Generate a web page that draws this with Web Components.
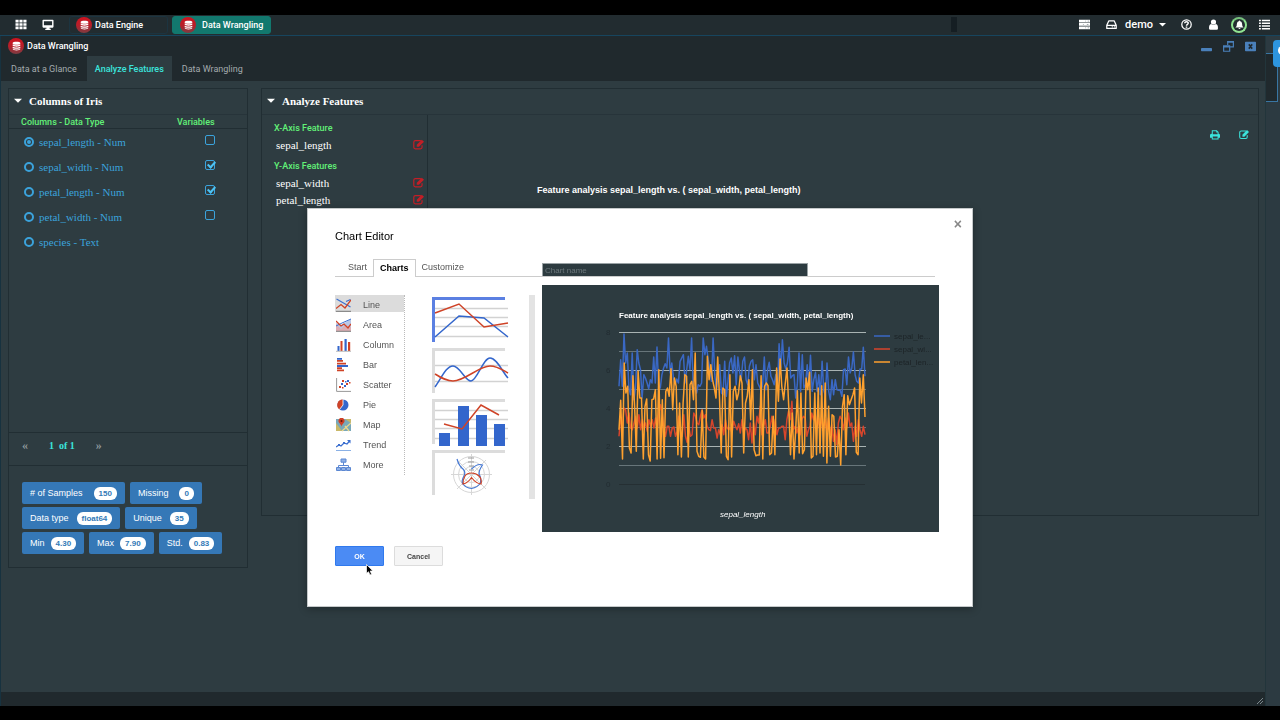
<!DOCTYPE html>
<html lang="en">
<head>
<meta charset="utf-8">
<title>Data Wrangling</title>
<style>
  body {
    margin: 0;
    background: #000;
    color: #fff;
    font-family: Roboto, sans-serif;
    font-size: 9px;
    --dark: #20292d;
    --body: #2e3c41;
    --line: #212e33;
    --blue: #3ba3dc;
    --cyan: #3be4dc;
    --green: #62f178;
  }
</style>
</head>
<body>
<wrangling-app></wrangling-app>

<script>
const ICONS = {
  grid: '<path d="M0 1h4v3.300H0zM5 1h4v3.300H5zM10 1h4v3.300h-4zM0 5.300h4v3.300H0zM5 5.300h4v3.300H5zM10 5.300h4v3.300h-4zM0 9.600h4v3.300H0zM5 9.600h4v3.300H5zM10 9.600h4v3.300h-4z"/>',
  desktop: '<path fill-rule="evenodd" d="M1 1h12q1 0 1 1v8q0 1-1 1H9v1.500h1.500V14h-7v-1.500H5V11H1q-1 0-1-1V2q0-1 1-1zm.8 1.800V8h10.400V2.800z"/>',
  database: '<path d="M1 2.500C1-.2 13-.2 13 2.500V3C13 5.500 1 5.500 1 3zM1 4.700c2.400 1.600 9.600 1.600 12 0V6.300C13 8.600 1 8.600 1 6.300zM1 8c2.400 1.600 9.600 1.600 12 0v1.600c0 2.300-12 2.300-12 0zM1 11.200c2.400 1.600 9.600 1.600 12 0v.6c0 2.700-12 2.700-12 0z"/>',
  server: '<path d="M0 1h14v3.500H0zM0 5.200h14v3.500H0zM0 9.400h14v3.500H0z"/><path d="M8 2.700h1M11 2.700h2M5 7h1M10 7h2M8 11.200h1M11 11.200h2" stroke="#8b9396"/>',
  hdd: '<path fill="none" stroke="currentColor" stroke-width="1.600" stroke-linejoin="round" d="M1 8l2.500-5.500h7L13 8v4H1zM1 8h12"/><circle cx="8" cy="10" r=".9"/><circle cx="10.800" cy="10" r=".9"/>',
  caret: '<path d="M0 4h14L7 11z"/>',
  help: '<circle cx="7" cy="7" r="6" fill="none" stroke="currentColor" stroke-width="1.600"/><path fill="none" stroke="currentColor" stroke-width="1.900" d="M4.700 5.500C4.800 2.900 9.300 3 9.200 5.400 9.100 6.900 7 6.800 7 8.600"/><path d="M6 9.500h2v1.700H6z"/>',
  user: '<circle cx="7" cy="3.800" r="3.300"/><path d="M4 6.300C1.800 7 1.200 9 1.300 12q0 1.700 1.700 1.700h8q1.700 0 1.700-1.700c.1-3-.5-5-2.700-5.700q-3 2.200-6 0z"/>',
  bell: '<path d="M7 0c.7 0 1 .6 1 1.200C11 2 11 5 11.300 7.500c.2 1.500.8 2.500 2.200 3.500H.5c1.400-1 2-2 2.200-3.500C3 5 3 2 6 1.200 6 .6 6.300 0 7 0zM5.300 11.700h3.400c-.4 2-3 2-3.400 0z"/>',
  list: '<path d="M0 1h2.400v2H0zM0 4.500h2.400v2H0zM0 8h2.400v2H0zM0 11.500h2.400v2H0zM3.600 1H14v2H3.600zM3.600 4.500H14v2H3.600zM3.600 8H14v2H3.600zM3.600 11.500H14v2H3.600z"/>',
  minimize: '<rect y="9" width="14" height="4" rx="1"/>',
  restore: '<path fill="none" stroke="currentColor" stroke-width="1.500" d="M6 5V1h7.200v6.500H9"/><path fill="none" stroke="currentColor" stroke-width="1.500" d="M.8 6.500H8.500V13H.8z"/><path d="M0 5.600h9v2.600H0zM5.300 0H14v2H5.300z"/>',
  close: '<path fill-rule="evenodd" d="M1 1h12q1 0 1 1v10q0 1-1 1H1q-1 0-1-1V2q0-1 1-1zm3 4l2 2-2 2 1.500 1.500 1.500-1.500 1.500 1.500L10 9 8 7l2-2-1.500-1.500L7 5 5.500 3.500z"/>',
  print: '<path fill-rule="evenodd" d="M2.500 1h7L12 3.500V6q2 0 2 2v3.500h-2V14H2.500v-2.500H0V8q0-2 2.500-2zm1.400 1.400V6.500h6.700V4.300H8.700V2.400zM3.900 9.800v2.800h6.700V9.800z"/>',
  edit: '<path fill="none" stroke="currentColor" stroke-width="1.500" stroke-linecap="round" d="M9.500 2H3Q1 2 1 4v6.500q0 2 2 2h6.500q2 0 2-2V8.500"/><path d="M11.200.8L14 3.500 7.500 10H4.800V7.200z"/>',
  line: '<path d="M0 13.300h15" stroke="#777"/><path fill="none" stroke="#3b6fd0" stroke-width="1.200" d="M.5 1l14 8M10 3.500l4.500-2"/><path fill="none" stroke="#cf4327" stroke-width="1.300" d="M0 10.500l5-4 4 3.500 6-8"/>',
  area: '<path fill="#b9c7e6" d="M0 5l5 2 10-6v12H0z"/><path fill="#dcaeb5" d="M0 6l5 5 4-4 6 2v4H0z"/><path fill="none" stroke="#3b6fd0" d="M0 8l6-3 9-4"/><path fill="none" stroke="#cf4327" stroke-width="1.300" d="M0 3l5 5 3-2 4 4 3-4"/><path d="M0 13.300h15" stroke="#777"/>',
  column: '<path fill="#3366cc" d="M1.500 8h2v5h-2zM8.500 1h2.200v12H8.500z"/><path fill="#cf4327" d="M4.500 3h2v10h-2zM12 4h2.200v9H12z"/><path d="M0 13.300h15" stroke="#bbb"/>',
  bar: '<path fill="#3366cc" d="M1 0h5v1.800H1zM1 7h11v2H1z"/><path fill="#cf4327" d="M1 2h6v1.800H1zM1 4.800h9v1.800H1zM1 9.300h5V11H1zM1 11.500h7v1.800H1z"/>',
  scatter: '<path fill="none" stroke="#999" d="M.6 0v13.400H15"/><path fill="#3366cc" d="M5 5h2v2H5zM8 7h2v2H8zM11 2h2v2h-2zM9 3h1.500v1.500H9z"/><path fill="#cf4327" d="M3 8h2v2H3zM6 2h2v2H6zM10 5h2v2h-2zM13 4h1.500v1.500H13zM6 9h1.500v1.500H6z"/>',
  pie: '<circle cx="7" cy="7" r="5.500" fill="#3366cc"/><path fill="#cf4327" d="M7 7L3.600 11.500A5.500 5.500 0 0 1 7 1.500z"/><path d="M7 7V1M7 7l-3.500 4.500" stroke="#fff" stroke-width=".8"/>',
  map: '<path fill="#79a8b8" d="M0 1h15v12H0z"/><path fill="#c9b868" d="M0 5l6 8H0zM9 1h6v4z"/><path d="M6 13L15 5M9 8l4 5" stroke="#ecd68b" stroke-width="1.300"/><path fill="#cf3e25" d="M5.500 9C5.500 6 2 5 2.500 2.500c.6-3.600 5.600-3.600 6 0C9 5 5.500 6 5.500 9z"/><circle cx="5.500" cy="3" r="1" fill="#5e160c"/>',
  trend: '<path d="M0 12.500h15" stroke="#8ab0e5"/><path fill="none" stroke="#3b6fd0" stroke-width="1.200" d="M0 9l3-2 2 1 3-3 3 1 3-3.500"/><path fill="#3b6fd0" d="M11 2h3.500v3.500zM2 6h2v2H2zM7 4h2v2H7z"/>',
  more: '<path fill="none" stroke="#5b87d2" d="M7.500 4v4M2.500 10V7.500h10V10"/><path fill="#8fb1e6" stroke="#5b87d2" d="M5 1h5v3.200H5zM.5 9.500h4v3h-4zM5.500 9.500h4v3h-4zM10.500 9.500h4v3h-4z"/>'
};

function define(name, html, setup) {
  customElements.define(name, class extends HTMLElement {
    constructor() {
      super();
      this.attachShadow({ mode: 'open' });
    }
    connectedCallback() {
      this.shadowRoot.innerHTML = typeof html === 'function' ? html(this) : html;
      if (setup) setup(this.shadowRoot, this);
    }
  });
}

const icon = name => `<ui-icon name="${name}"></ui-icon>`;

define('ui-icon', el => `
  <style>
    :host { display: inline-flex; flex: none; width: 11px; height: 11px; }
    svg { width: 100%; height: 100%; fill: currentColor; }
  </style>
  <svg viewBox="0 0 ${el.hasAttribute('wide') ? 15 : 14} 14" aria-hidden="true">${ICONS[el.getAttribute('name')]}</svg>
`);

// red round logo used by every data app
define('app-logo', `
  <style>
    :host {
      display: inline-flex; flex: none; align-items: center; justify-content: center;
      width: 16px; height: 16px; border-radius: 50%;
      background: linear-gradient(#d0121f, #b5202b 55%, #7c3c42);
      color: #fff;
    }
    ui-icon { width: 9px; height: 10px; }
  </style>
  ${icon('database')}
`);

define('task-button', `
  <style>
    :host { display: block; }
    button {
      display: flex; align-items: center; gap: 3px;
      box-sizing: border-box; width: 99px; height: 18px; padding: 0 6px;
      border: 1px solid #1c3440; border-radius: 3px;
      background: none; color: #fff; font: 500 9px Roboto, sans-serif;
    }
    :host([active]) button { background: #12786e; border-color: #12786e; gap: 6px; padding-left: 7px; }
  </style>
  <button type="button"><app-logo></app-logo><slot></slot></button>
`);

define('top-bar', `
  <style>
    :host {
      display: flex; align-items: center; justify-content: space-between;
      box-sizing: border-box; height: 21px; padding: 0 10px 1px 15px;
      background: #222c30; border-bottom: 1px solid #17455e;
    }
    div { display: flex; align-items: center; }
    button { display: flex; align-items: center; padding: 0; border: 0; background: none; color: #fff; font: 500 11px Roboto, sans-serif; }
    .left { gap: 4px; }
    .left > button { margin-right: 11px; }
    .left > button ui-icon { width: 12px; }
    .right { gap: 16px; }
    .user { gap: 8px; margin-right: -1px; }
    .user ui-icon[name=caret] { width: 7px; margin-left: -2px; }
    .mark { width: 6px; height: 15px; margin-right: 106px; background: #151e23; }
    .bell { justify-content: center; box-sizing: border-box; width: 16px; height: 16px; border: 2px solid #90e492; border-top-color: #78c27d; border-radius: 50%; margin: 0 -4px; }
    .bell ui-icon { width: 9px; height: 10px; }
  </style>
  <div class="left">
    <button type="button" aria-label="Apps">${icon('grid')}</button>
    <button type="button" aria-label="Desktop">${icon('desktop')}</button>
    <task-button>Data Engine</task-button>
    <task-button active>Data Wrangling</task-button>
  </div>
  <div class="right">
    <span class="mark"></span>
    <button type="button" aria-label="Servers">${icon('server')}</button>
    <button type="button" class="user">${icon('hdd')}demo${icon('caret')}</button>
    <button type="button" aria-label="Help">${icon('help')}</button>
    <button type="button" aria-label="Account">${icon('user')}</button>
    <button type="button" aria-label="Notifications" class="bell">${icon('bell')}</button>
    <button type="button" aria-label="Menu">${icon('list')}</button>
  </div>
`);

define('app-window', `
  <style>
    :host { display: flex; flex-direction: column; background: var(--body); border-left: 1px solid #17323f; border-right: 1px solid #22353b; }
    header { background: var(--dark); }
    .title { display: flex; align-items: center; gap: 3px; height: 20px; padding: 0 9px 0 7px; font-weight: 500; }
    .controls { display: flex; gap: 11px; margin-left: auto; }
    .controls button { display: flex; padding: 0; border: 0; background: none; color: #4a80ba; }
    nav { display: flex; height: 25px; }
    nav a { display: flex; align-items: center; padding: 0 10px; color: #a4abae; text-decoration: none; }
    nav a[aria-current] { padding: 0 8px; background: var(--body); color: var(--cyan); font-weight: 500; }
    main { flex: 1; display: flex; align-items: flex-start; gap: 13px; padding: 7px 6px 0 7px; }
    footer { display: flex; justify-content: flex-end; align-items: flex-end; height: 14px; background: var(--dark); }
    footer svg { width: 6px; height: 6px; margin: 0 2px 2px 0; }
  </style>
  <header>
    <div class="title">
      <app-logo></app-logo>Data Wrangling
      <span class="controls">
        <button type="button" aria-label="Minimize">${icon('minimize')}</button>
        <button type="button" aria-label="Restore">${icon('restore')}</button>
        <button type="button" aria-label="Close">${icon('close')}</button>
      </span>
    </div>
    <nav>
      <a href="#glance">Data at a Glance</a>
      <a href="#analyze" aria-current="page">Analyze Features</a>
      <a href="#wrangling">Data Wrangling</a>
    </nav>
  </header>
  <main><slot></slot></main>
  <footer><svg viewBox="0 0 6 6"><path d="M0 6L6 0M3 6l3-3" stroke="#7b878c"/></svg></footer>
`);

define('fold-panel', `
  <style>
    :host { display: flex; flex-direction: column; box-sizing: border-box; border: 1px solid var(--line); }
    h2 {
      display: flex; align-items: center; gap: 7px; box-sizing: border-box; height: 26px; margin: 0; padding: 0 5px 2px;
      border-bottom: 1px solid #27343a; font: bold 11px "Liberation Serif", serif;
    }
    ui-icon { width: 8px; }
  </style>
  <h2>${icon('caret')}<slot name="heading"></slot></h2>
  <slot></slot>
`);

const COLUMNS = [
  ['sepal_length', 'Num', false],
  ['sepal_width', 'Num', true],
  ['petal_length', 'Num', true],
  ['petal_width', 'Num', false],
  ['species', 'Text', null]
];

define('column-table', `
  <style>
    :host { display: block; }
    table { width: 100%; border-collapse: collapse; color: var(--blue); font: 11px "Liberation Serif", serif; }
    th { height: 13px; padding: 0 0 0 12px; border-bottom: 1px solid var(--line); color: var(--green); font: 500 9px Roboto, sans-serif; text-align: left; }
    th:last-child, td:last-child { width: 70px; padding: 0; }
    td { height: 25px; padding: 0 0 0 15px; }
    td:last-child input { display: block; margin: 0 0 3px 28px; }
    label { display: flex; align-items: center; gap: 5px; }
    input { position: relative; appearance: none; box-sizing: border-box; width: 10px; height: 10px; margin: 0; border: 1px solid var(--blue); border-radius: 2px; }
    input[type=radio] { display: grid; place-items: center; border-width: 2px; border-radius: 50%; }
    input[type=radio]:checked::before { content: ""; width: 4px; height: 4px; border-radius: 50%; background: var(--blue); }
    input[type=checkbox]:checked::after {
      content: ""; position: absolute; left: 3px; top: -1px; width: 3px; height: 6px;
      border: solid #4cc3f5; border-width: 0 2px 2px 0; transform: rotate(42deg);
    }
  </style>
  <table>
    <thead><tr><th>Columns - Data Type</th><th>Variables</th></tr></thead>
    <tbody>
      ${COLUMNS.map(([name, type, on], i) => `
        <tr>
          <td><label><input type="radio" name="column" ${i ? '' : 'checked'}>${name} - ${type}</label></td>
          <td>${on === null ? '' : `<input type="checkbox" aria-label="${name}" ${on ? 'checked' : ''}>`}</td>
        </tr>`).join('')}
    </tbody>
  </table>
`);

define('page-switch', `
  <style>
    :host {
      display: flex; align-items: center; gap: 21px; box-sizing: border-box; height: 34px; padding: 0 13px 8px;
      border: solid var(--line); border-width: 1px 0; color: var(--cyan); font: bold 10px "Liberation Serif", serif;
    }
    button { padding: 0; border: 0; background: none; color: #8f999d; font: bold 12px "Liberation Serif", serif; }
  </style>
  <button type="button" aria-label="Previous">«</button><span>1 &nbsp;of 1</span><button type="button" aria-label="Next">»</button>
`);

define('stat-button', el => `
  <style>
    :host { display: block; }
    button {
      display: flex; align-items: center; gap: ${el.getAttribute('gap')}px; height: 22px; padding: 0 8px;
      border: 0; border-radius: 2px; background: #3578b7; color: #fff; font: 9px "Liberation Sans", sans-serif;
    }
    span { min-width: 4px; padding: 1px 5px; border-radius: 6px; background: #fff; color: #337ab7; font: bold 8px/11px "Liberation Sans", sans-serif; text-align: center; }
  </style>
  <button type="button"><slot></slot><span>${el.getAttribute('value')}</span></button>
`);

define('stat-list', `
  <style>
    :host { display: grid; gap: 3px; padding: 16px 13px 13px; }
    div { display: flex; gap: 5px; }
  </style>
  <div><stat-button gap="11" value="150"># of Samples</stat-button><stat-button gap="11" value="0">Missing</stat-button></div>
  <div><stat-button gap="8" value="float64">Data type</stat-button><stat-button gap="8" value="35">Unique</stat-button></div>
  <div><stat-button gap="6" value="4.30">Min</stat-button><stat-button gap="6" value="7.90">Max</stat-button><stat-button gap="6" value="0.83">Std.</stat-button></div>
`);

define('axis-features', `
  <style>
    :host { display: block; box-sizing: border-box; width: 166px; padding: 6px 3px 0 12px; border-right: 1px solid var(--line); }
    h3 { margin: 0; color: var(--green); font: 500 9px/15px Roboto, sans-serif; }
    ul { margin: 0 0 6px; padding: 0 0 0 2px; list-style: none; }
    li { display: flex; align-items: center; justify-content: space-between; height: 17px; font: 11px "Liberation Serif", serif; }
    button { display: flex; padding: 0; border: 0; background: none; color: #c41e26; }
  </style>
  <h3>X-Axis Feature</h3>
  <ul>
    <li>sepal_length<button type="button" aria-label="Edit sepal_length">${icon('edit')}</button></li>
  </ul>
  <h3>Y-Axis Features</h3>
  <ul>
    <li>sepal_width<button type="button" aria-label="Edit sepal_width">${icon('edit')}</button></li>
    <li>petal_length<button type="button" aria-label="Edit petal_length">${icon('edit')}</button></li>
  </ul>
`);

define('feature-analysis', `
  <style>
    :host { display: flex; height: 400px; }
    section { flex: 1; }
    .tools { display: flex; justify-content: flex-end; gap: 19px; padding: 14px 9px 0 0; }
    .tools button { display: flex; padding: 0; border: 0; background: none; color: var(--cyan); }
    .tools ui-icon { width: 10px; }
    h3 { margin: 43px 0 0 109px; font: bold 9px/14px "Liberation Sans", sans-serif; }
  </style>
  <axis-features></axis-features>
  <section>
    <div class="tools">
      <button type="button" aria-label="Print">${icon('print')}</button>
      <button type="button" aria-label="Edit chart">${icon('edit')}</button>
    </div>
    <h3>Feature analysis sepal_length vs. ( sepal_width, petal_length)</h3>
  </section>
`);

// heights below the top grid line, three to a pixel
const SERIES = [
  ['#3a68c4', [163,83,163,6,93,63,168,188,63,203,168,53,93,113,198,128,138,153,170,143,153,75,153,45,158,168,128,108,95,108,18,123,93,138,158,141,153,88,78,68,153,113,73,113,18,168,168,183,158,163,153,18,68,43,83,108,148,18,128,173,128,98,183,188,88,193,148,93,78,123,71,158,75,118,143,88,75,143,158,103,88,83,143,98,153,163,176,158,75,173,113,91,133,143,158,128,173,35,108,23,93,111,93,46,138,131,128,198,158,63,178,68,168,158,98,158,70,178,143,121,178,128,188,88,173,193,93,178,203,143,188,143,173,175,175,193,113,111,158,75,123,108,60,128,148,153,111,111,46,133]],
  ['#d8452b', [313,253,293,228,233,273,243,288,293,273,253,288,248,293,263,288,273,298,263,283,263,288,258,293,243,218,243,293,313,283,283,313,288,285,313,298,253,298,313,248,313,331,283,313,308,243,253,273,278,253,233,258,248,283,293,296,263,288,288,318,293,308,278,308,263,288,293,288,303,268,283,293,275,303,263,303,288,293,323,273,333,273,308,253,273,223,308,283,263,303,303,283,253,293,263,308,288,288,283,283,323,263,238,263,208,293,283,303,283,308,263,253,258,313,293,281,243,263,243,288,258,303,253,293,263,298,258,308,278,328,293,338,273,253,263,293,258,288,243,283,273,328,283,313,263,293,313,283,308]],
  ['#ffa12e', [293,205,381,93,183,163,348,363,131,223,358,118,198,198,381,223,201,368,387,203,201,173,381,113,379,203,377,178,168,193,110,233,138,163,368,213,375,213,128,133,375,158,148,203,63,358,373,376,235,375,381,73,143,98,143,168,198,75,198,363,168,173,373,383,128,375,178,163,203,183,131,153,363,213,193,143,263,113,353,371,369,369,131,381,163,153,161,368,363,253,368,108,208,81,163,203,153,108,228,368,243,381,293,176,363,183,365,353,138,173,121,378,373,183,368,168,363,161,373,153,393,223,373,248,253,375,373,293,399,223,188,368,191,218,203,188,168,361,368,138,213,128,255]]
];

define('line-chart', `
  <style>
    :host { display: block; background: #2d3b40; }
    svg { display: block; width: 100%; font: 8px "Liberation Sans", sans-serif; }
    polyline { fill: none; stroke-width: 1.500; stroke-linejoin: round; }
    .muted { fill: #1c2326; }
    .axis { fill: #222c31; }
    .title { fill: #fff; font-weight: bold; }
    .label { fill: #fff; font-style: italic; }
  </style>
  <svg viewBox="0 0 397 247">
    <text class="title" x="77" y="33">Feature analysis sepal_length vs. ( sepal_width, petal_length)</text>
    <g class="axis"></g>
    <g class="plot" transform="translate(77 47)"></g>
    <path d="M77 199.500h246" stroke="#252f33"/>
    <g class="muted legend"></g>
    <text class="label" x="178" y="232">sepal_length</text>
  </svg>
`, root => {
  const plot = root.querySelector('.plot');
  let lines = '';
  for (let i = 0; i < 8; i++)
    lines += `<path d="M0 ${i * 19 + .5}h247" stroke="${i % 2 ? '#67757a' : '#a9b3b3'}"/>`;
  lines += SERIES.map(([color, data]) => {
    const step = 246 / (data.length - 1);
    return `<polyline stroke="${color}" points="${data.map((y, i) => `${(i * step).toFixed(1)},${(y / 3).toFixed(1)}`).join(' ')}"/>`;
  }).join('');
  plot.innerHTML = lines;
  root.querySelector('.axis').innerHTML = [8, 6, 4, 2, 0].map((v, i) => `<text x="64" y="${50 + i * 38}">${v}</text>`).join('');
  root.querySelector('.legend').innerHTML = ['sepal_le...', 'sepal_wi...', 'petal_len...'].map((t, i) =>
    `<path d="M332 ${51 + i * 13}h16" stroke="${SERIES[i][0]}" stroke-width="1.500"/><text x="352" y="${54 + i * 13}">${t}</text>`).join('');
});

const TYPES = ['Line', 'Area', 'Column', 'Bar', 'Scatter', 'Pie', 'Map', 'Trend', 'More'];

define('chart-types', `
  <style>
    :host { display: block; width: 69px; border-right: 1px dotted #bbb; }
    button {
      display: flex; align-items: center; gap: 12px; width: 100%; height: 20px; padding: 2px 0 0 1px;
      border: 0; border-bottom: 3px solid #fff; background: #fff; color: #555; font: 9px "Liberation Sans", sans-serif;
    }
    button[aria-pressed=true] { background: #dcdcdc; }
    ui-icon { width: 15px; height: 14px; }
  </style>
  ${TYPES.map((t, i) => `<button type="button" aria-pressed="${!i}"><ui-icon wide name="${t.toLowerCase()}"></ui-icon>${t}</button>`).join('')}
`);

const GRID = '<path d="M0 8.500h73M0 17.500h73M0 26.500h73M0 36.500h73" stroke="#d2d2d2"/>';
const THUMBS = [
  ['Line', GRID + '<path stroke="#3366cc" d="M0 37L24 16l25 2 24 19"/><path stroke="#cf4327" d="M0 13L24 4l25 23 24-4"/>'],
  ['Smooth line', '<path d="M0 14.500h73M0 30.500h73" stroke="#d2d2d2"/><path stroke="#3366cc" d="M0 36C6 28 11 15 18 15s12 15 18 15S48 7 55 7s13 15 18 20"/><path stroke="#cf4327" d="M0 23c8 5 12 7 18 7 12 0 26-15 37-15 7 0 11 3 18 7"/>'],
  ['Combo', GRID + '<path fill="#3366cc" d="M4 31h11v13H4zM23 4h11v40H23zM41 13h11v31H41zM59 22h11v22H59z"/><path stroke="#cf4327" d="M9 22l18 5L46 3l18 10"/>'],
  ['Radar', '<g stroke="#d6d6d6" stroke-width="1"><circle cx="36.500" cy="21.500" r="18"/><circle cx="36.500" cy="21.500" r="13"/><circle cx="36.500" cy="21.500" r="8"/><path d="M16 21.500h41M36.500 1v41M22 7l29 29M51 7L22 36"/></g><path stroke="#999" stroke-width="1" d="M33 5h6M33 9h6M34 13h5M34 17h5"/><path stroke="#4377d4" stroke-width="1.200" d="M22 6q2 7 6 10 3 3 1 7-3 5-1 8 3 4 8.500 4.500 6-1 9-5.500 1-5-1.500-9 0-4 3.500-9-5-2-11 4"/><path stroke="#cf4327" stroke-width="1.200" d="M28 31q0-5 2-8 2-3 6.500-3t7.500 3q3 3 2 8-5-.5-9.500-6.500Q33 30 28 31z"/>']
];

define('chart-thumbs', `
  <style>
    :host { display: flex; width: 97px; height: 204px; border-right: 6px solid #e3e3e3; }
    div { display: grid; gap: 6px; align-content: start; padding-top: 2px; }
    button { display: block; box-sizing: border-box; width: 73px; height: 45px; padding: 0; border: solid #dcdcdc; border-width: 3px 0 0 3px; background: none; }
    button[aria-pressed=true] { border-color: #5b80e2; }
    svg { display: block; width: 73px; height: 43px; overflow: visible; fill: none; stroke-width: 1.500; }
  </style>
  <div>${THUMBS.map(([name, art], i) => `<button type="button" aria-label="${name}" aria-pressed="${!i}"><svg viewBox="0 0 73 43">${art}</svg></button>`).join('')}</div>
`);

define('chart-editor', `
  <style>
    :host {
      position: fixed; left: 50%; top: 208px; transform: translateX(-50%);
      box-sizing: border-box; width: 666px; height: 399px; padding: 19px 27px;
      background: #fff; border: 1px solid #c5c9ca; box-shadow: 0 2px 8px rgba(0, 0, 0, .3);
      color: #000; font: 9px "Liberation Sans", sans-serif;
    }
    h1 { margin: 0; font: 11px/16px "Liberation Sans", sans-serif; }
    .x { position: absolute; right: 10px; top: 8px; padding: 0; border: 0; background: none; color: #888; font: bold 14px/14px "Liberation Sans", sans-serif; }
    .tabs { display: flex; align-items: flex-end; box-sizing: border-box; width: 600px; height: 33px; border-bottom: 1px solid #ccc; }
    .tabs div { display: flex; align-items: flex-end; width: 207px; padding-left: 7px; box-sizing: border-box; }
    a { height: 17px; box-sizing: border-box; padding: 0 6px; color: #555; line-height: 17px; text-decoration: none; }
    a[aria-current] { margin-bottom: -1px; height: 18px; border: 1px solid #ccc; border-bottom: 0; background: #fff; color: #000; font-weight: bold; line-height: 16px; }
    input { box-sizing: border-box; width: 266px; height: 13px; padding: 0 2px; border: 1px solid #9aa2a5; border-bottom: 0; background: #2d3b40; color: #fff; font: 8px "Liberation Sans", sans-serif; }
    input::placeholder { color: #6c777b; opacity: 1; }
    .body { display: flex; align-items: flex-start; }
    chart-types { margin-top: 18px; }
    chart-thumbs { margin: 18px 7px 0 27px; }
    line-chart { width: 397px; margin-top: 8px; flex: none; }
    .actions { display: flex; gap: 10px; margin-top: 14px; }
    .actions button { box-sizing: border-box; min-width: 49px; height: 20px; padding: 0; border: 1px solid #dcdcdc; border-radius: 1px; background: #f5f5f5; color: #444; font: bold 7px "Liberation Sans", sans-serif; }
    .actions .ok { border-color: #3079ed; background: #4b8bf4; color: #fff; }
  </style>
  <h1>Chart Editor</h1>
  <button class="x" type="button" aria-label="Close">×</button>
  <div class="tabs">
    <div><a href="#start">Start</a><a href="#charts" aria-current="page">Charts</a><a href="#customize">Customize</a></div>
    <input type="text" placeholder="Chart name" aria-label="Chart name">
  </div>
  <div class="body">
    <chart-types></chart-types>
    <chart-thumbs></chart-thumbs>
    <line-chart></line-chart>
  </div>
  <div class="actions"><button type="button" class="ok">OK</button><button type="button">Cancel</button></div>
`);

define('mouse-pointer', `
  <style>
    :host { position: fixed; left: 366px; top: 564px; width: 8px; height: 12px; }
    svg { display: block; }
  </style>
  <svg width="8" height="12" viewBox="0 0 8 12"><path d="M.5.500v9l2-1.800L4 11l1.600-.7L4.200 7h2.700z" fill="#000" stroke="#fff" stroke-width=".7"/></svg>
`);

// strip of desktop right of the window, with the dock that peeks in
define('desk-edge', `
  <style>
    :host { position: relative; display: block; width: 14px; background: #2c3a41; overflow: hidden; }
    .box { position: absolute; left: 0; top: 17px; width: 11px; height: 47px; border: 1px solid #3976a3; border-left: 0; background: var(--dark); }
    .knob { position: absolute; left: 7px; top: 4px; width: 20px; height: 27px; border-radius: 4px; background: #2d95df; }
    .knob::before { content: ""; position: absolute; left: 5px; top: 6px; width: 9px; height: 9px; border-radius: 50%; background: #fff; }
  </style>
  <div class="box"></div><div class="knob"></div>
`);

define('wrangling-app', `
  <style>
    :host { display: flex; flex-direction: column; box-sizing: border-box; min-height: 100vh; padding: 15px 0 14px; }
    .desk { flex: 1; display: flex; }
    app-window { flex: 1; }
    .columns { width: 240px; }
    column-table { height: 317px; }
    .analysis { flex: 1; }
  </style>
  <top-bar></top-bar>
  <div class="desk">
    <app-window>
      <fold-panel class="columns">
        <span slot="heading">Columns of Iris</span>
        <column-table></column-table>
        <page-switch></page-switch>
        <stat-list></stat-list>
      </fold-panel>
      <fold-panel class="analysis">
        <span slot="heading">Analyze Features</span>
        <feature-analysis></feature-analysis>
      </fold-panel>
    </app-window>
    <desk-edge></desk-edge>
  </div>
  <chart-editor></chart-editor>
  <mouse-pointer></mouse-pointer>
`);
</script>
</body>
</html>
